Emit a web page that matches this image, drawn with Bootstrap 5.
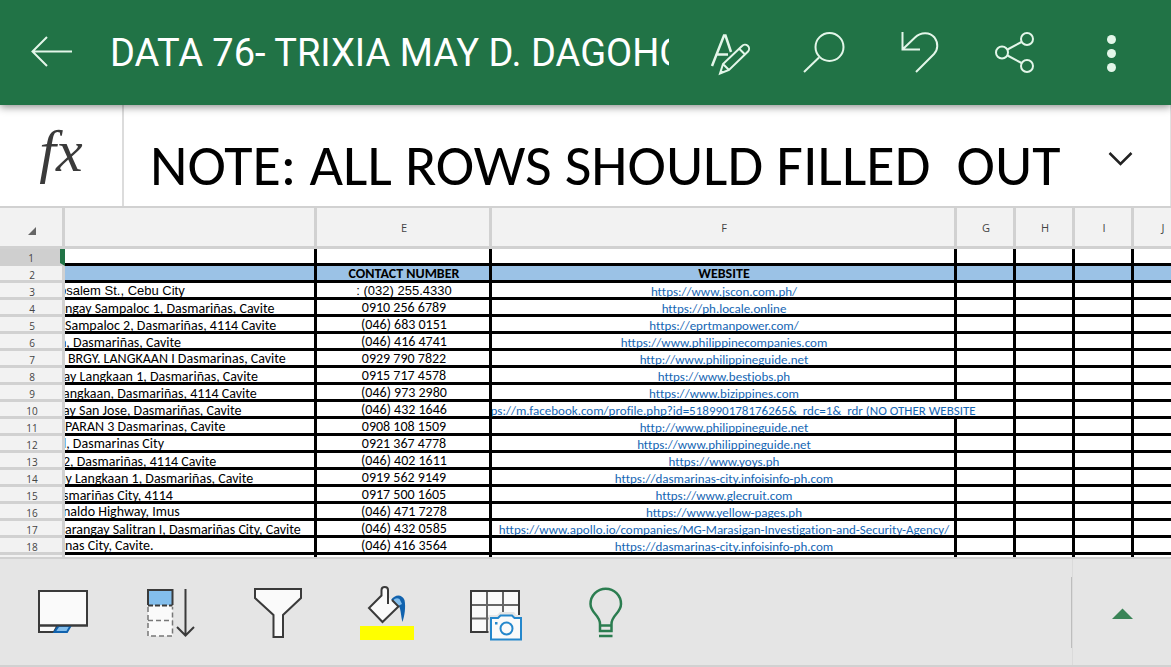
<!DOCTYPE html>
<html lang="en">
<head>
<meta charset="utf-8">
<meta name="viewport" content="width=device-width, initial-scale=1">
<title>DATA 76- TRIXIA MAY D. DAGOHOY</title>
<link href="https://cdn.jsdelivr.net/npm/bootstrap@5.3.0/dist/css/bootstrap.min.css" rel="stylesheet">
<style>
  :root { --excel: #217346; --rule: #d1d1d1; --head: #f2f2f2; }
  body { font-family: Carlito, Lato, "Open Sans", sans-serif; font-variant-ligatures: none; color: #000; }
  button { border: 0; background: none; padding: 0; display: block; flex: none; }
  svg { display: block; }

  .app-bar { height: 105px; background: var(--excel); box-shadow: 0 2px 8px rgba(0,0,0,.45); z-index: 2; padding-right: 13px; }
  .app-bar svg { fill: none; stroke: #e3f6e9; stroke-width: 2; }
  .doc-title { font: 400 38px/48px Roboto, sans-serif; color: #fff; margin: 0 14px 0 7px; min-width: 0; }

  .formula-bar { height: 101px; background: #fff; border-right: 1px solid #e0e0e0; }
  .fx-label { width: 124px; border-right: 2px solid #dcdcdc; font: italic 60px/92px "Liberation Serif", serif; color: #3a3a3a; }
  .fx-input { border: 0; outline: 0; min-width: 0; padding: 20px 0 0 26px; font-size: 58px; color: #000; background: none; }

  .sheet { border-top: 2px solid var(--rule); background: #fff; min-height: 0; }
  .grid { table-layout: fixed; width: 1193px; border-collapse: separate; border-spacing: 0; font-size: 14px; line-height: 14px; }
  .grid th, .grid td { padding: 0 0 0 2px; height: 17px; border: solid #000; border-width: 0 3px 3px 0; white-space: nowrap; overflow: hidden; text-align: center; vertical-align: top; }
  .grid thead th { height: 41px; line-height: 36px; padding-top: 2px; }
  .grid thead th, .grid tbody th { font-family: "Open Sans", sans-serif; font-size: 11px; font-weight: 400; color: #444; background: var(--head); border-color: var(--rule); }
  .grid thead th:first-child { padding: 0; }
  .grid tbody th { font-size: 10px; }
  .grid tbody td:nth-child(2) { text-align: left; padding: 0; }
  .grid div { height: 14px; line-height: 18px; overflow: hidden; }
  .grid .mid { line-height: 16px; }
  .grid a { color: #1566b4; text-decoration: none; font-size: 13px; display: block; }
  .grid .active-row th { background: #cfcfcf; border-right: 5px solid var(--excel); border-bottom-color: #cfcfcf; }
  .grid .title-row td { background: #9bc2e6; font-weight: 700; }
  .grid .cut-s { text-indent: -2px; }
  .grid .cut-l { text-indent: -6px; }
  .grid .pad-s { text-indent: 3px; }
  .grid .arial { font-family: "Liberation Sans", sans-serif; font-size: 13px; }
  .grid .spill { overflow: visible; border-right: 0; clip-path: inset(0 -20px 0 0); }
  .grid .spill div { overflow: visible; display: flex; justify-content: center; }

  .tool-bar { height: 110px; background: #e5e5e5; border: solid var(--rule); border-width: 2px 0; padding-left: 9px; }
  .tool-bar svg { fill: none; stroke: #3a3a3a; stroke-width: 2; }
</style>
</head>
<body class="vh-100 d-flex flex-column overflow-hidden">

<header class="app-bar d-flex align-items-center position-relative flex-shrink-0">
  <button type="button" aria-label="Back"><svg width="103" height="105" viewBox="0 0 103 105"><path d="M72 51.500H33M47 37 32.500 51.500 47 66"/></svg></button>
  <h1 class="doc-title flex-grow-1 overflow-hidden text-nowrap">DATA 76- TRIXIA MAY D. DAGOHOY</h1>
  <button type="button" aria-label="Format"><svg width="95" height="105" viewBox="683 0 95 105"><path stroke-width="2.500" d="M712 66 724 35.500h1.500L731 52M717.500 54.500H728"/><path d="M720 73.500 723 64 742 46a4 4 0 0 1 6 5.500L729 70ZM723 64l6 6M739 48.500l6 6M720 73.500l3-2"/></svg></button>
  <button type="button" aria-label="Search"><svg width="95" height="105" viewBox="778 0 95 105"><circle cx="829.500" cy="47" r="14"/><path d="M819 57.500 804 72"/></svg></button>
  <button type="button" aria-label="Undo"><svg width="95" height="105" viewBox="873 0 95 105"><path d="M902.500 32V49.500H920M902.500 49.500 915 37.500C921 31.500 930 32 934.500 37.500 938.500 43 938 50 934 54L916 72"/></svg></button>
  <button type="button" aria-label="Share"><svg width="95" height="105" viewBox="968 0 95 105"><circle cx="1002" cy="52.500" r="6"/><circle cx="1027" cy="39" r="6"/><circle cx="1027" cy="66" r="6"/><path d="M1007.500 49.500 1021.500 42M1007.500 55.500 1021.500 63"/></svg></button>
  <button type="button" aria-label="More options"><svg width="95" height="105" viewBox="1063 0 95 105"><g fill="#e3f6e9" stroke="none"><circle cx="1111.500" cy="39.500" r="4.500"/><circle cx="1111.500" cy="53.500" r="4.500"/><circle cx="1111.500" cy="67.500" r="4.500"/></g></svg></button>
</header>

<section class="formula-bar d-flex flex-shrink-0">
  <label for="formula" class="fx-label text-center flex-shrink-0">fx</label>
  <input id="formula" class="fx-input flex-grow-1" type="text" value="NOTE: ALL ROWS SHOULD FILLED  OUT">
  <button type="button" aria-label="Expand formula bar"><svg width="102" height="101" viewBox="1068 105 102 101" fill="none" stroke="#222" stroke-width="2.500"><path d="M1109.500 153 1120.500 164 1131.500 153"/></svg></button>
</section>

<main class="sheet flex-grow-1 overflow-hidden">
<table class="grid">
  <colgroup><col style="width:65px"><col style="width:252px"><col style="width:175px"><col style="width:465px"><col style="width:59px"><col style="width:59px"><col style="width:59px"><col style="width:59px"></colgroup>
  <thead>
    <tr><th aria-label="Select all"><svg width="62" height="38" viewBox="0 208 62 38"><path d="M36 227V235H28Z" fill="#666"/></svg></th><th></th><th>E</th><th>F</th><th>G</th><th>H</th><th>I</th><th>J</th></tr>
  </thead>
  <tbody>
    <tr class="active-row"><th><div>1</div></th><td></td><td></td><td></td><td></td><td></td><td></td><td></td></tr>
    <tr class="title-row"><th><div>2</div></th><td></td><td><div class="mid">CONTACT NUMBER</div></td><td><div class="mid">WEBSITE</div></td><td></td><td></td><td></td><td></td></tr>
    <tr><th><div>3</div></th><td class="cut-l"><div class="mid arial">osalem St., Cebu City</div></td><td><div class="mid arial">: (032) 255.4330</div></td><td><div><a href="#">https://www.jscon.com.ph/</a></div></td><td></td><td></td><td></td><td></td></tr>
    <tr><th><div>4</div></th><td><div>ngay Sampaloc 1, Dasmariñas, Cavite</div></td><td><div class="mid">0910 256 6789</div></td><td><div><a href="#">https://ph.locale.online</a></div></td><td></td><td></td><td></td><td></td></tr>
    <tr><th><div>5</div></th><td><div>Sampaloc 2, Dasmariñas, 4114 Cavite</div></td><td><div class="mid">(046) 683 0151</div></td><td><div><a href="#">https://eprtmanpower.com/</a></div></td><td></td><td></td><td></td><td></td></tr>
    <tr><th><div>6</div></th><td class="cut-l"><div>n, Dasmariñas, Cavite</div></td><td><div class="mid">(046) 416 4741</div></td><td><div><a href="#">https://www.philippinecompanies.com</a></div></td><td></td><td></td><td></td><td></td></tr>
    <tr><th><div>7</div></th><td class="pad-s"><div class="mid">BRGY. LANGKAAN I Dasmarinas, Cavite</div></td><td><div class="mid">0929 790 7822</div></td><td><div><a href="#">http://www.philippineguide.net</a></div></td><td></td><td></td><td></td><td></td></tr>
    <tr><th><div>8</div></th><td class="cut-l"><div>ray Langkaan 1, Dasmariñas, Cavite</div></td><td><div class="mid">0915 717 4578</div></td><td><div><a href="#">https://www.bestjobs.ph</a></div></td><td></td><td></td><td></td><td></td></tr>
    <tr><th><div>9</div></th><td class="cut-s"><div>angkaan, Dasmariñas, 4114 Cavite</div></td><td><div class="mid">(046) 973 2980</div></td><td><div><a href="#">https://www.bizippines.com</a></div></td><td></td><td></td><td></td><td></td></tr>
    <tr><th><div>10</div></th><td class="cut-s"><div>ay San Jose, Dasmariñas, Cavite</div></td><td><div class="mid">(046) 432 1646</div></td><td class="spill"><div><a href="#">https://m.facebook.com/profile.php?id=518990178176265&amp;&nbsp; rdc=1&amp;&nbsp; rdr (NO OTHER WEBSITE</a></div></td><td></td><td></td><td></td><td></td></tr>
    <tr><th><div>11</div></th><td><div class="mid">PARAN 3 Dasmarinas, Cavite</div></td><td><div class="mid">0908 108 1509</div></td><td><div><a href="#">http://www.philippineguide.net</a></div></td><td></td><td></td><td></td><td></td></tr>
    <tr><th><div>12</div></th><td class="cut-s"><div class="mid">l, Dasmarinas City</div></td><td><div class="mid">0921 367 4778</div></td><td><div><a href="#">https://www.philippineguide.net</a></div></td><td></td><td></td><td></td><td></td></tr>
    <tr><th><div>13</div></th><td class="cut-s"><div>2, Dasmariñas, 4114 Cavite</div></td><td><div class="mid">(046) 402 1611</div></td><td><div><a href="#">https://www.yoys.ph</a></div></td><td></td><td></td><td></td><td></td></tr>
    <tr><th><div>14</div></th><td class="cut-l"><div>ay Langkaan 1, Dasmariñas, Cavite</div></td><td><div class="mid">0919 562 9149</div></td><td><div><a href="#">https://dasmarinas-city.infoisinfo-ph.com</a></div></td><td></td><td></td><td></td><td></td></tr>
    <tr><th><div>15</div></th><td class="cut-s"><div>smariñas City, 4114</div></td><td><div class="mid">0917 500 1605</div></td><td><div><a href="#">https://www.glecruit.com</a></div></td><td></td><td></td><td></td><td></td></tr>
    <tr><th><div>16</div></th><td class="cut-s"><div class="mid">naldo Highway, Imus</div></td><td><div class="mid">(046) 471 7278</div></td><td><div><a href="#">https://www.yellow-pages.ph</a></div></td><td></td><td></td><td></td><td></td></tr>
    <tr><th><div>17</div></th><td><div>arangay Salitran I, Dasmariñas City, Cavite</div></td><td><div class="mid">(046) 432 0585</div></td><td><div><a href="#">https://www.apollo.io/companies/MG-Marasigan-Investigation-and-Security-Agency/</a></div></td><td></td><td></td><td></td><td></td></tr>
    <tr><th><div>18</div></th><td><div class="mid">nas City, Cavite.</div></td><td><div class="mid">(046) 416 3564</div></td><td><div><a href="#">https://dasmarinas-city.infoisinfo-ph.com</a></div></td><td></td><td></td><td></td><td></td></tr>
    <tr><th></th><td></td><td></td><td></td><td></td><td></td><td></td><td></td></tr>
  </tbody>
</table>
</main>

<footer class="tool-bar d-flex flex-shrink-0">
  <button type="button" aria-label="Sheets"><svg width="108" height="106" viewBox="9 559 108 106"><path fill="#fafafa" d="M39 591H87V625.500H39ZM39 625.500V632H54L57.500 625.500"/><path fill="#83beec" stroke="#1062ae" d="M54.500 632 58.500 626H70.500L67 632Z"/><path d="M38 625.500H88"/></svg></button>
  <button type="button" aria-label="Fill down"><svg width="108" height="106" viewBox="117 559 108 106"><path fill="#fafafa" stroke="none" d="M148 606H172.500V636H148Z"/><path fill="#83beec" stroke="none" d="M148 590H172.500V605H148Z"/><path d="M148 605V590H172.500V605"/><path stroke-dasharray="5 2" d="M148 605.500H172.500"/><path stroke="#777" stroke-width="1.500" stroke-dasharray="5 3" d="M148 607V636H172.500V607M148 620.500H172.500"/><path d="M185.500 589V635M177 627 185.500 635.500 194 627"/></svg></button>
  <button type="button" aria-label="Filter"><svg width="108" height="106" viewBox="225 559 108 106"><path fill="#fafafa" d="M255 589H301V598L283 615V637H273.500V615L255 598Z"/></svg></button>
  <button type="button" aria-label="Fill color"><svg width="108" height="106" viewBox="333 559 108 106"><path fill="#ff0" stroke="none" d="M360 626H414V640H360Z"/><path fill="#1062ae" stroke="none" d="M391 600C395 594 402 594 404.500 600 406 607 404.500 616 402.500 622 401 617 401 610 399 606Z"/><path fill="#83beec" stroke="none" d="M393 600.500Q396 597 399.500 599L402 604 398 606Z"/><path fill="#fafafa" stroke="none" d="M369 608 381.500 595V590Q384.500 584 388 590V597L398 606 382.500 622Z"/><path d="M388 604V590C388 586 381.500 586 381.500 590V595.500L369 608 382.500 622 398.500 606.500 392 600"/></svg></button>
  <button type="button" aria-label="Data from picture"><svg width="108" height="106" viewBox="441 559 108 106"><path fill="#fafafa" d="M471 591H519V632H471Z"/><path stroke="#666" d="M487 591V632M503 591V632M471 605H519M471 618.500H519"/><path d="M471 591H519V632H471Z"/><path fill="#e5e5e5" stroke="none" d="M488.500 615H497L500 612H514L516 615H524V642H488.500Z"/><path fill="#fafafa" stroke="#2487cc" d="M491 618H498L500.500 615.500H512L514.500 618H521V639.500H491Z"/><circle cx="506.500" cy="628.500" r="6" stroke="#2487cc"/><path fill="#2487cc" stroke="none" d="M495 622H497.500V624.500H495Z"/></svg></button>
  <button type="button" aria-label="Tell me"><svg width="108" height="106" viewBox="549 559 108 106"><path stroke="#2b7d50" stroke-width="2.500" d="M600 631V624C600 615 590.500 613 590.500 604A15 15 0 0 1 621 604C621 613 611.500 615 611.500 624V631ZM600 625.500H611.500M599 636H612.500"/></svg></button>
  <button type="button" aria-label="Expand ribbon" class="ms-auto"><svg width="100" height="106" viewBox="1071 559 100 106"><path stroke="#dadada" stroke-width="1" d="M1072.500 559V665"/><path stroke="#bdbdbd" stroke-width="1" d="M1071.500 577V648"/><path fill="#3a8457" stroke="none" d="M1112 619 1122.500 608.500 1133 619Z"/></svg></button>
</footer>

<script src="https://cdn.jsdelivr.net/npm/bootstrap@5.3.0/dist/js/bootstrap.bundle.min.js"></script>
</body>
</html>
